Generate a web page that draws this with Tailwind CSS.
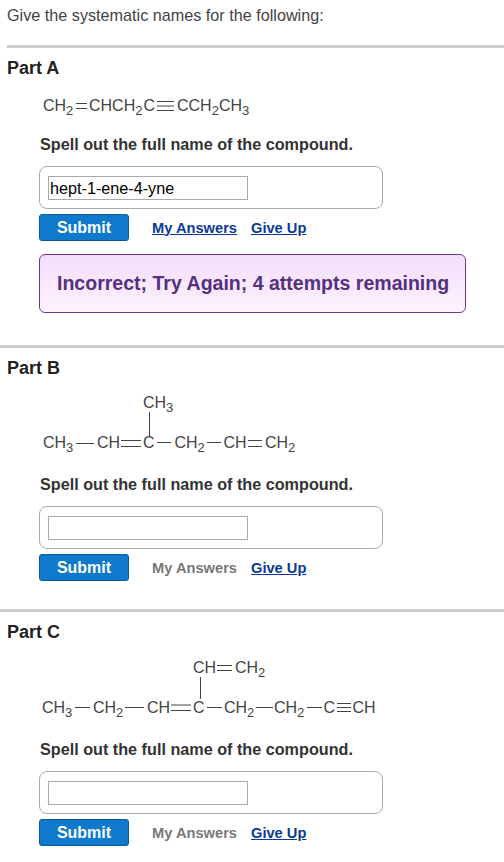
<!DOCTYPE html>
<html lang="en">
<head>
    <meta charset="UTF-8">
    <title>Systematic names</title>
    <script src="https://cdn.jsdelivr.net/npm/@tailwindcss/browser@4"></script>
</head>
<body class="bg-white font-['Liberation_Sans',Arial,sans-serif] overflow-hidden">
    <p class="pl-[7px] h-[30px] leading-[30px] text-[16.2px] text-[#444]">Give the systematic names for the following:</p>

    <!-- Part A -->
    <div class="mt-[15px] ml-[7px] h-[3px] bg-[#ccc]"></div>
    <h3 class="mt-[10px] pl-[7px] leading-[20px] text-[18px] font-bold text-[#222]">Part A</h3>
    <svg class="block mt-[10px]" width="504" height="32" viewBox="0 88 504 32" fill="#444" stroke="#444" stroke-width="1" font-size="16">
        <g stroke="none">
            <text x="43" y="110.5">CH<tspan font-size="13" dy="4">2</tspan></text>
            <text x="89" y="110.5">CHCH<tspan font-size="13" dy="4">2</tspan></text>
            <text x="143.5" y="110.5">C</text>
            <text x="177" y="110.5">CCH<tspan font-size="13" dy="4">2</tspan><tspan dy="-4">CH</tspan><tspan font-size="13" dy="4">3</tspan></text>
        </g>
        <path d="M76 103.5H87M76 108.5H87M157 101.5H174M157 106H174M157 110.5H174"/>
    </svg>
    <p class="mt-[14px] pl-[40px] leading-[20px] text-[16.2px] font-bold text-[#333]">Spell out the full name of the compound.</p>
    <div class="mt-[12px] ml-[39px] w-[344px] h-[43px] border border-[#aaa] rounded-lg pl-[8px] pt-[9px]">
        <input type="text" value="hept-1-ene-4-yne" class="block w-[200px] h-[24px] border border-[#aaa] px-[1px] text-[16.2px] text-black outline-none">
    </div>
    <div class="mt-[5px] ml-[39px] flex items-center h-[27px]">
        <button class="w-[90px] h-[27px] bg-[#0f7acb] border border-[#0b5c99] rounded-[3px] text-white text-[16px] font-bold">Submit</button>
        <a href="#" class="ml-[23px] text-[14.67px] font-bold text-[#0a3a96] underline">My Answers</a>
        <a href="#" class="ml-[14px] text-[14.67px] font-bold text-[#0a3a96] underline">Give Up</a>
    </div>
    <div class="mt-[13px] ml-[39px] w-[427px] h-[59px] border border-[#6d3a91] rounded-md bg-linear-to-b from-[#f3ddfc] to-[#fdf2fe] flex items-center pl-[17px] text-[19.55px] font-bold text-[#54307f]">Incorrect; Try Again; 4 attempts remaining</div>

    <!-- Part B -->
    <div class="mt-[32px] ml-0 h-[3px] bg-[#ccc]"></div>
    <h3 class="mt-[10px] pl-[7px] leading-[20px] text-[18px] font-bold text-[#222]">Part B</h3>
    <svg class="block mt-[7px]" width="504" height="75" viewBox="0 385 504 75" fill="#444" stroke="#444" stroke-width="1" font-size="16">
        <g stroke="none">
            <text x="143" y="408">CH<tspan font-size="13" dy="4">3</tspan></text>
            <text x="43" y="448">CH<tspan font-size="13" dy="4">3</tspan></text>
            <text x="97" y="448">CH</text>
            <text x="143" y="448">C</text>
            <text x="174.5" y="448">CH<tspan font-size="13" dy="4">2</tspan></text>
            <text x="223.5" y="448">CH</text>
            <text x="265" y="448">CH<tspan font-size="13" dy="4">2</tspan></text>
        </g>
        <path d="M149.5 412V436M76 443.5H94M121 440.5H141M121 446.5H141M157 442.5H171M207 442.5H221M248 440.5H262M248 446.5H262"/>
    </svg>
    <p class="mt-[14px] pl-[40px] leading-[20px] text-[16.2px] font-bold text-[#333]">Spell out the full name of the compound.</p>
    <div class="mt-[12px] ml-[39px] w-[344px] h-[43px] border border-[#aaa] rounded-lg pl-[8px] pt-[9px]">
        <input type="text" class="block w-[200px] h-[24px] border border-[#aaa] px-[1px] text-[16.2px] text-black outline-none">
    </div>
    <div class="mt-[5px] ml-[39px] flex items-center h-[27px]">
        <button class="w-[90px] h-[27px] bg-[#0f7acb] border border-[#0b5c99] rounded-[3px] text-white text-[16px] font-bold">Submit</button>
        <span class="ml-[23px] text-[14.67px] font-bold text-[#777]">My Answers</span>
        <a href="#" class="ml-[14px] text-[14.67px] font-bold text-[#0a3a96] underline">Give Up</a>
    </div>

    <!-- Part C -->
    <div class="mt-[28px] h-[3px] bg-[#ccc]"></div>
    <h3 class="mt-[10px] pl-[7px] leading-[20px] text-[18px] font-bold text-[#222]">Part C</h3>
    <svg class="block mt-[8px]" width="504" height="75" viewBox="0 650 504 75" fill="#444" stroke="#444" stroke-width="1" font-size="16">
        <g stroke="none">
            <text x="193" y="673">CH</text>
            <text x="235" y="673">CH<tspan font-size="13" dy="4">2</tspan></text>
            <text x="42" y="712.5">CH<tspan font-size="13" dy="4">3</tspan></text>
            <text x="93" y="712.5">CH<tspan font-size="13" dy="4">2</tspan></text>
            <text x="147" y="712.5">CH</text>
            <text x="193" y="712.5">C</text>
            <text x="224" y="712.5">CH<tspan font-size="13" dy="4">2</tspan></text>
            <text x="274" y="712.5">CH<tspan font-size="13" dy="4">2</tspan></text>
            <text x="323.5" y="712.5">C</text>
            <text x="352.5" y="712.5">CH</text>
        </g>
        <path d="M200.5 677V699M217 665.5H232M217 670.5H232M75 707.5H90M125 707.5H144M171 705H191M171 710.5H191M207 707.5H222M256 707.5H273M307 707.5H322M337 703.5H351M337 707.5H351M337 711.5H351"/>
    </svg>
    <p class="mt-[14px] pl-[40px] leading-[20px] text-[16.2px] font-bold text-[#333]">Spell out the full name of the compound.</p>
    <div class="mt-[12px] ml-[39px] w-[344px] h-[43px] border border-[#aaa] rounded-lg pl-[8px] pt-[9px]">
        <input type="text" class="block w-[200px] h-[24px] border border-[#aaa] px-[1px] text-[16.2px] text-black outline-none">
    </div>
    <div class="mt-[5px] ml-[39px] flex items-center h-[27px]">
        <button class="w-[90px] h-[27px] bg-[#0f7acb] border border-[#0b5c99] rounded-[3px] text-white text-[16px] font-bold">Submit</button>
        <span class="ml-[23px] text-[14.67px] font-bold text-[#777]">My Answers</span>
        <a href="#" class="ml-[14px] text-[14.67px] font-bold text-[#0a3a96] underline">Give Up</a>
    </div>
</body>
</html>
